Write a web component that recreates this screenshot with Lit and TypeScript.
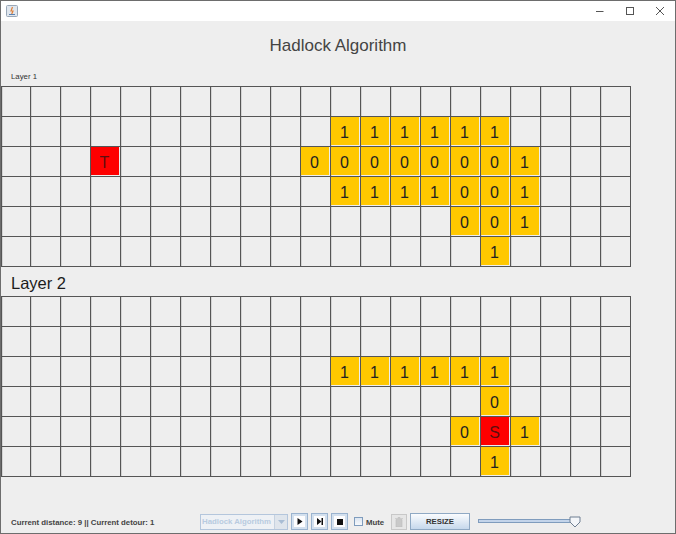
import { LitElement, html, css, svg } from "lit";
import { customElement } from "lit/decorators.js";

type Cell = { t: string; red?: boolean };
type Layer = Record<string, Cell>;

const row = (m: Layer, r: number, from: number, to: number, t: string) => {
  for (let c = from; c <= to; c++) m[`${r},${c}`] = { t };
};

const layer1: Layer = {};
row(layer1, 1, 11, 16, "1");
row(layer1, 2, 10, 16, "0");
row(layer1, 2, 17, 17, "1");
row(layer1, 3, 11, 14, "1");
row(layer1, 3, 15, 16, "0");
row(layer1, 3, 17, 17, "1");
row(layer1, 4, 15, 16, "0");
row(layer1, 4, 17, 17, "1");
row(layer1, 5, 16, 16, "1");
layer1["2,3"] = { t: "T", red: true };

const layer2: Layer = {};
row(layer2, 2, 11, 16, "1");
row(layer2, 3, 16, 16, "0");
row(layer2, 4, 15, 15, "0");
row(layer2, 4, 17, 17, "1");
row(layer2, 5, 16, 16, "1");
layer2["4,16"] = { t: "S", red: true };

@customElement("app-root")
export class AppRoot extends LitElement {
  static styles = css`
    :host {
      display: block;
      width: 676px;
      height: 534px;
      font-family: "Liberation Sans", Arial, sans-serif;
    }
    .window {
      box-sizing: border-box;
      width: 676px;
      height: 534px;
      border: 1px solid #6d6d6d;
      background: #eeeeee;
      display: flex;
      flex-direction: column;
      overflow: hidden;
    }
    .titlebar {
      height: 20px;
      background: #fff;
      flex: none;
      display: flex;
      align-items: center;
      padding-left: 5px;
    }
    .appicon { width: 12px; height: 12px; flex: none; display: block; }
    .winbtns { margin-left: auto; display: flex; align-items: center; }
    .winbtn { width: 30px; height: 20px; display: flex; align-items: center; justify-content: center; }
    .winbtn svg { display: block; width: 10px; height: 10px; }
    .title {
      height: 37px;
      text-align: center;
      font-size: 17px;
      line-height: 50px;
      color: #444;
      flex: none;
    }
    .l1 {
      height: 28px;
      box-sizing: border-box;
      padding: 14px 0 0 10px;
      font-size: 7.8px;
      line-height: 10px;
      color: #333;
      flex: none;
    }
    .l2 {
      height: 29px;
      box-sizing: border-box;
      padding: 6px 0 0 10px;
      font-size: 16.5px;
      line-height: 20px;
      color: #1c1c1c;
      flex: none;
    }
    .grid {
      display: grid;
      grid-template-columns: 29px repeat(20, 30px);
      grid-auto-rows: 30px;
      width: 629px;
      border-right: 1px solid #555;
      border-bottom: 1px solid #555;
      box-sizing: content-box;
      flex: none;
    }
    .cell {
      box-sizing: border-box;
      border-top: 1px solid #555;
      border-left: 1px solid #555;
      box-shadow: inset 1px 0 0 #d4d4d4;
      display: flex;
      align-items: stretch;
      justify-content: stretch;
      min-width: 0;
    }
    .fill {
      flex: 1;
      margin: 0 1px 1px 0;
      padding: 3px 1px 0 0;
      background: #ffc800;
      color: #222;
      font-size: 16px;
      display: flex;
      align-items: center;
      justify-content: center;
    }
    .fill.red { background: #fe0000; color: #5a0f0f; }
    .status {
      flex: none;
      height: 17px;
      margin: auto 0 3px;
      display: flex;
      align-items: center;
      padding-left: 10px;
      font-size: 7.8px;
      font-weight: bold;
      color: #444;
    }
    .status .txt { width: 189px; flex: none; padding-top: 1px; }
    .combo {
      width: 88px; height: 16px;
      box-sizing: border-box;
      display: flex;
      flex: none;
      border: 1px solid #b4c6dc;
      background: #eef1f5;
    }
    .combo .val {
      flex: 1;
      color: #b8cbe0;
      line-height: 14px;
      padding-left: 1px;
      white-space: nowrap;
      overflow: hidden;
    }
    .combo .arrow {
      width: 12px;
      border-left: 1px solid #c6d2e0;
      background: #dfe5ec;
      display: flex; align-items: center; justify-content: center;
    }
    .arrow svg, .tb svg, .trash svg { display: block; }
    .tb {
      width: 17px; height: 17px;
      box-sizing: border-box;
      border: 1px solid #9ab3cf;
      box-shadow: inset 0 0 0 2px #d3e0ee;
      background: #fdfdfe;
      margin-left: 3px;
      display: flex; align-items: center; justify-content: center;
      flex: none;
    }
    .check {
      width: 9px; height: 9px;
      box-sizing: border-box;
      border: 1px solid #7f9cbd;
      background: linear-gradient(#dbe5f1, #f6f8fb);
      margin: 0 3px 0 6px;
      flex: none;
    }
    .mute { width: 25px; flex: none; color: #444; padding-top: 1px; }
    .trash {
      width: 16px; height: 16px; box-sizing: border-box;
      border: 1px solid #c8c8c8;
      background: #e6e6e6;
      display: flex; align-items: center; justify-content: center;
      flex: none;
    }
    .resize {
      width: 60px; height: 17px; box-sizing: border-box;
      margin-left: 3px;
      border: 1px solid #8fa9c4;
      background: linear-gradient(#fafcfe, #c6d8ec);
      color: #333;
      text-align: center;
      line-height: 15px;
      flex: none;
    }
    .slider {
      position: relative;
      width: 103px;
      height: 17px;
      margin-left: 8px;
      flex: none;
    }
    .track {
      position: absolute;
      left: 0; right: 8px; top: 6px;
      height: 4px;
      border: 1px solid #7f9cbd;
      background: #c3d4ea;
      box-sizing: border-box;
    }
    .thumb { position: absolute; left: 91px; top: 3px; display: block; }
  `;

  private grid(l: Layer) {
    const cells = [];
    for (let r = 0; r < 6; r++) {
      for (let c = 0; c < 21; c++) {
        const v = l[`${r},${c}`];
        cells.push(html`<div class="cell">${v ? html`<div class="fill ${v.red ? "red" : ""}">${v.t}</div>` : ""}</div>`);
      }
    }
    return html`<div class="grid">${cells}</div>`;
  }

  render() {
    return html`
      <div class="window">
        <div class="titlebar">
          <svg class="appicon" viewBox="0 0 12 12">
            <rect x="0.5" y="0.5" width="11" height="11" rx="1" fill="#dfe6ee" stroke="#9aa8b8"/>
            <path d="M6.5 2 L5 6 L7 6 L5.5 9.5" fill="none" stroke="#e0813a" stroke-width="1.2"/>
            <path d="M3 9.5 H9" stroke="#5c82b0" stroke-width="1"/>
          </svg>
          <div class="winbtns">
            <div class="winbtn"><svg viewBox="0 0 10 10">${svg`<path d="M1 5.5H8.5" stroke="#555" stroke-width="1"/>`}</svg></div>
            <div class="winbtn"><svg viewBox="0 0 10 10">${svg`<rect x="1.5" y="1.5" width="7" height="7" fill="none" stroke="#555" stroke-width="1"/>`}</svg></div>
            <div class="winbtn"><svg viewBox="0 0 10 10">${svg`<path d="M1 1L9 9M9 1L1 9" stroke="#555" stroke-width="1"/>`}</svg></div>
          </div>
        </div>
        <div class="title">Hadlock Algorithm</div>
        <div class="l1">Layer 1</div>
        ${this.grid(layer1)}
        <div class="l2">Layer 2</div>
        ${this.grid(layer2)}
        <div class="status">
          <div class="txt">Current distance: 9 || Current detour: 1</div>
          <div class="combo">
            <div class="val">Hadlock Algorithm</div>
            <div class="arrow"><svg width="7" height="4" viewBox="0 0 7 4"><path d="M0 0H7L3.5 4Z" fill="#a9bdd4"/></svg></div>
          </div>
          <div class="tb"><svg width="6" height="7" viewBox="0 0 6 7"><path d="M0.5 0L5.5 3.5L0.5 7Z" fill="#111"/></svg></div>
          <div class="tb"><svg width="6" height="7" viewBox="0 0 6 7"><path d="M0 0L4.5 3.5L0 7Z" fill="#111"/><rect x="4.5" y="0" width="1.5" height="7" fill="#111"/></svg></div>
          <div class="tb"><svg width="6" height="6" viewBox="0 0 6 6"><rect width="6" height="6" fill="#111"/></svg></div>
          <div class="check"></div>
          <div class="mute">Mute</div>
          <div class="trash"><svg width="8" height="10" viewBox="0 0 8 10"><path d="M0 1.5H8M3 1.5V0.5H5V1.5M1 2.5H7V10H1Z" fill="#c9c9c9" stroke="#bdbdbd" stroke-width="0.6"/></svg></div>
          <div class="resize">RESIZE</div>
          <div class="slider">
            <div class="track"></div>
            <svg class="thumb" width="12" height="12" viewBox="0 0 12 12"><path d="M1 1H11V6L6 11L1 6Z" fill="#f4f6f9" stroke="#6f7f92"/></svg>
          </div>
        </div>
      </div>
    `;
  }
}
